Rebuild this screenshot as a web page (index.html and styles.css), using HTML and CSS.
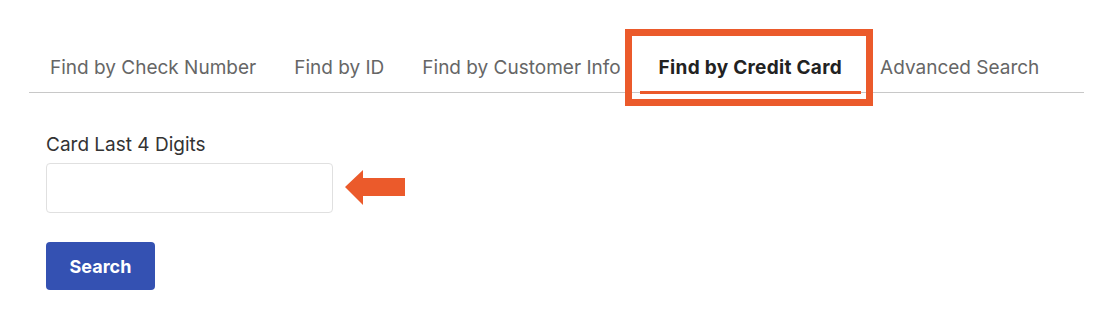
FILE: index.html
```html
<!DOCTYPE html>
<html lang="en">
<head>
<meta charset="utf-8">
<title>Find by Credit Card</title>
<link rel="stylesheet" href="styles.css">
</head>
<body>
<div class="page">
  <nav class="tabs">
    <div class="tab">Find by Check Number</div>
    <div class="tab">Find by ID</div>
    <div class="tab">Find by Customer Info</div>
    <div class="tab active">Find by Credit Card<span class="highlight"></span></div>
    <div class="tab">Advanced Search</div>
  </nav>
  <form class="form">
    <label class="label" for="last4">Card Last 4 Digits</label>
    <div class="field-row">
      <input class="input" id="last4" type="text">
      <svg class="arrow" width="60" height="36" viewBox="0 0 60 36" aria-hidden="true">
        <polygon points="0,17 18,0 18,8 60,8 60,26 18,26 18,35" fill="#eb5a2b"/>
      </svg>
    </div>
    <button class="button" type="button">Search</button>
  </form>
</div>
</body>
</html>
```
FILE: styles.css
```css
html, body {
  margin: 0;
  padding: 0;
  background: #ffffff;
}
body {
  font-family: "Inter", "Liberation Sans", sans-serif;
}
.page {
  padding: 56px 22px 0 29px;
}
.tabs {
  display: flex;
  border-bottom: 1px solid #c8c8c8;
  padding-left: 2px;
}
.tab {
  position: relative;
  padding: 0 19px 11px;
  font-size: 19px;
  line-height: 24px;
  color: #666666;
  border-bottom: 3px solid transparent;
  margin-bottom: -2px;
  white-space: nowrap;
}
.tab.active {
  font-weight: 700;
  color: #222222;
  letter-spacing: 0.3px;
  border-bottom-color: #eb5a2b;
}
.highlight {
  position: absolute;
  left: -15px;
  right: -12px;
  top: -27px;
  bottom: -15px;
  border: 7px solid #eb5a2b;
}
.form {
  padding: 40px 0 0 17px;
  display: flex;
  flex-direction: column;
  align-items: flex-start;
}
.label {
  font-size: 19px;
  line-height: 24px;
  color: #333333;
  margin-bottom: 6px;
}
.field-row {
  display: flex;
  align-items: center;
  gap: 12px;
}
.input {
  box-sizing: border-box;
  width: 287px;
  height: 50px;
  border: 1px solid #e0e0e0;
  border-radius: 4px;
  margin: 0;
  padding: 0 12px;
  font-size: 17px;
}
.arrow {
  display: block;
}
.button {
  margin-top: 29px;
  width: 109px;
  height: 48px;
  border: none;
  border-radius: 4px;
  background: #3451b2;
  color: #ffffff;
  font-family: inherit;
  font-size: 18px;
  font-weight: 700;
  cursor: pointer;
}
```
